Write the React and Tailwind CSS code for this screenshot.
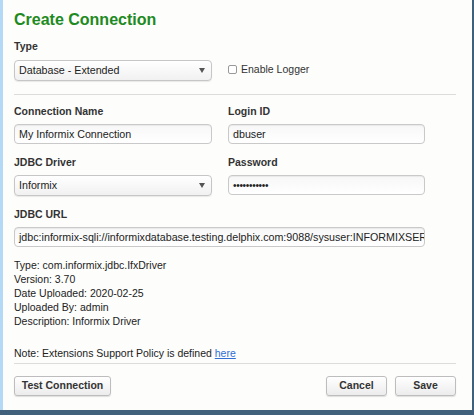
import React from 'react';

const font = { fontFamily: '"Liberation Sans", Arial, Helvetica, sans-serif' };

function Label({ children }) {
    return <div className="text-[10.5px] leading-[14px] font-bold text-[#333]">{children}</div>;
}

function TextInput({ value, type = 'text' }) {
    return (
        <div className="h-[20px] rounded-[4px] border border-[#c9c9c9] bg-gradient-to-b from-[#f7f7f7] to-white px-[4px] flex items-center overflow-hidden shadow-[inset_0_1px_1px_rgba(0,0,0,0.06)]">
            <span className={`whitespace-nowrap text-[#222] ${type === 'password' ? 'tracking-[-0.3px] text-[10px]' : 'text-[10.7px]'}`}>{value}</span>
        </div>
    );
}

function Select({ value }) {
    return (
        <div className="h-[21px] rounded-[4px] border border-[#c6c6c6] bg-gradient-to-b from-white to-[#f1f1f1] pl-[4px] pr-[6px] flex items-center justify-between shadow-[0_1px_1px_rgba(0,0,0,0.08)]">
            <span className="text-[10.7px] text-[#222]">{value}</span>
            <svg width="6" height="5" viewBox="0 0 6 5" aria-hidden>
                <path d="M0 0 L6 0 L3 5 Z" fill="#555" />
            </svg>
        </div>
    );
}

function Button({ children, className = '' }) {
    return (
        <button className={`h-[20px] rounded-[3px] border border-[#bdbdbd] bg-gradient-to-b from-white to-[#ececec] text-[10.5px] font-bold text-[#333] shadow-[0_1px_1px_rgba(0,0,0,0.12)] ${className}`}>
            {children}
        </button>
    );
}

export default function App() {
    return (
        <div className="w-[474px] h-[415px] bg-[#40607c] flex flex-col overflow-hidden" style={font}>
            <div className="h-[410px] w-[472px] bg-[#fdfdfc] border-l-[3px] border-[#b3d9f7] pl-[11px] pr-[16px] pt-[9px]">
                <h1 className="text-[16px] leading-[22px] font-bold text-[#1d8a22]">Create Connection</h1>

                <div className="mt-[8px] grid grid-cols-[198px_197px] gap-x-[16px]">
                    <div>
                        <Label>Type</Label>
                        <div className="mt-[7px]">
                            <Select value="Database - Extended" />
                        </div>
                    </div>
                    <div className="pt-[19px] flex items-center gap-[4px]">
                        <span className="w-[9px] h-[9px] rounded-[2px] border border-[#999] bg-white"></span>
                        <span className="text-[10.5px] text-[#333]">Enable Logger</span>
                    </div>
                </div>

                <div className="mt-[13px] h-px bg-[#dcdcdc] w-[442px]"></div>

                <div className="mt-[9px] grid grid-cols-[198px_197px] gap-x-[16px]">
                    <div>
                        <Label>Connection Name</Label>
                        <div className="mt-[6px]">
                            <TextInput value="My Informix Connection" />
                        </div>
                    </div>
                    <div>
                        <Label>Login ID</Label>
                        <div className="mt-[6px]">
                            <TextInput value="dbuser" />
                        </div>
                    </div>
                    <div className="mt-[11px]">
                        <Label>JDBC Driver</Label>
                        <div className="mt-[6px]">
                            <Select value="Informix" />
                        </div>
                    </div>
                    <div className="mt-[11px]">
                        <Label>Password</Label>
                        <div className="mt-[6px]">
                            <TextInput value="•••••••••••" type="password" />
                        </div>
                    </div>
                </div>

                <div className="mt-[11px] w-[411px]">
                    <Label>JDBC URL</Label>
                    <div className="mt-[6px]">
                        <TextInput value="jdbc:informix-sqli://informixdatabase.testing.delphix.com:9088/sysuser:INFORMIXSERVER" />
                    </div>
                </div>

                <div className="mt-[11px] text-[10.5px] leading-[14px] text-[#222]">
                    <div>Type: com.informix.jdbc.IfxDriver</div>
                    <div>Version: 3.70</div>
                    <div>Date Uploaded: 2020-02-25</div>
                    <div>Uploaded By: admin</div>
                    <div>Description: Informix Driver</div>
                    <div className="mt-[18px]">
                        Note: Extensions Support Policy is defined{' '}
                        <a href="#" className="text-[#2f6fd6] underline">here</a>
                    </div>
                </div>

                <div className="mt-[3px] h-px bg-[#dcdcdc] w-[442px]"></div>

                <div className="mt-[12px] flex items-center w-[442px]">
                    <Button className="w-[97px]">Test Connection</Button>
                    <div className="ml-auto flex gap-[8px]">
                        <Button className="w-[61px]">Cancel</Button>
                        <Button className="w-[61px]">Save</Button>
                    </div>
                </div>
            </div>
        </div>
    );
}
